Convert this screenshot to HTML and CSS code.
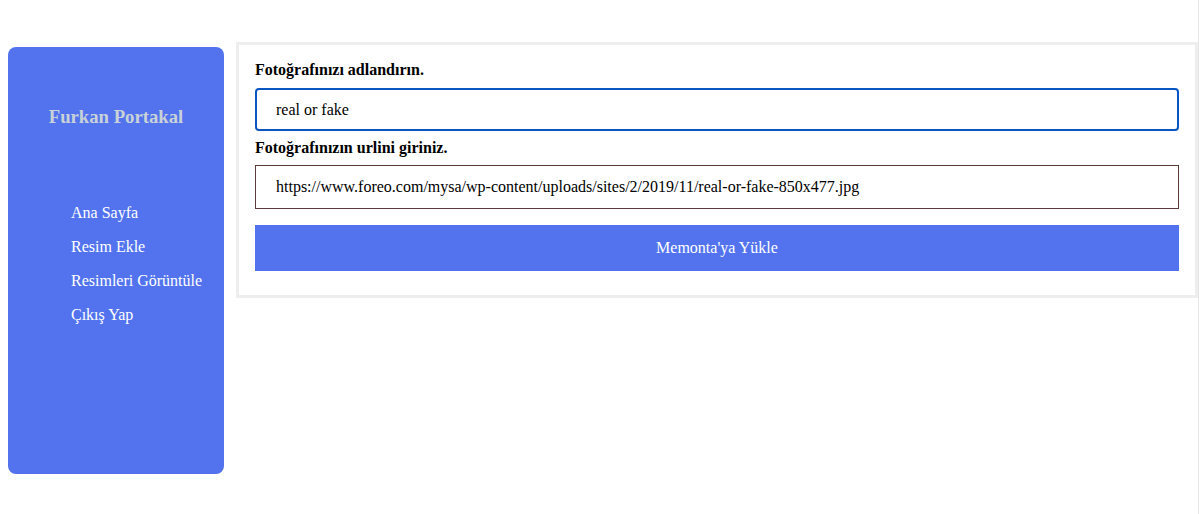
FILE: index.html
```html
<!DOCTYPE html>
<html lang="tr">
<head>
<meta charset="utf-8">
<title>Memonta</title>
<link rel="stylesheet" href="styles.css">
</head>
<body>
<div class="page">
  <aside class="sidebar">
    <h2 class="brand">Furkan Portakal</h2>
    <nav class="nav">
      <a class="nav-link" href="#">Ana Sayfa</a>
      <a class="nav-link" href="#">Resim Ekle</a>
      <a class="nav-link" href="#">Resimleri Görüntüle</a>
      <a class="nav-link" href="#">Çıkış Yap</a>
    </nav>
  </aside>
  <main class="panel">
    <label class="field-label" for="name">Fotoğrafınızı adlandırın.</label>
    <input class="field field-focus" id="name" type="text" value="real or fake">
    <label class="field-label second" for="url">Fotoğrafınızın urlini giriniz.</label>
    <input class="field" id="url" type="text" value="https://www.foreo.com/mysa/wp-content/uploads/sites/2/2019/11/real-or-fake-850x477.jpg">
    <button class="submit" type="button">Memonta'ya Yükle</button>
  </main>
</div>
</body>
</html>
```
FILE: styles.css
```css
* { box-sizing: border-box; }
html, body {
  margin: 0;
  padding: 0;
  background: #fff;
  font-family: "Liberation Serif", "Times New Roman", serif;
  color: #000;
}
.page {
  display: flex;
  align-items: flex-start;
  gap: 12px;
  width: 1199px;
  min-height: 514px;
  padding-left: 8px;
  border-right: 1px solid #e6e6e6;
}
.sidebar {
  margin-top: 47px;
  width: 216px;
  height: 427px;
  background: #5273ed;
  border-radius: 8px;
  padding-top: 58px;
}
.brand {
  margin: 0;
  text-align: center;
  font-size: 18.72px;
  line-height: 24px;
  font-weight: bold;
  color: #c8d2d8;
}
.nav {
  display: flex;
  flex-direction: column;
  padding-left: 63px;
  margin-top: 75px;
}
.nav-link {
  color: #fff;
  text-decoration: none;
  font-size: 16px;
  line-height: 18px;
  margin-bottom: 16px;
}
.panel {
  margin-top: 42px;
  width: 962px;
  border: 3px solid #eeeeee;
  padding: 16px 16px 24px;
  display: flex;
  flex-direction: column;
}
.field-label {
  display: block;
  font-weight: bold;
  font-size: 16px;
  line-height: 18px;
  margin-bottom: 9px;
}
.field-label.second {
  margin-top: 8px;
  margin-bottom: 8px;
}
.field {
  display: block;
  width: 100%;
  height: 44px;
  padding: 0 20px;
  font-family: "Liberation Serif", "Times New Roman", serif;
  font-size: 16px;
  color: #000;
  border: 1px solid #5c3b3b;
  border-radius: 0;
  background: #fff;
  outline: none;
}
.field-focus {
  height: 43px;
  border: 2px solid #0a55c2;
  border-radius: 4px;
  padding: 0 19px;
}
.submit {
  margin-top: 16px;
  width: 100%;
  height: 46px;
  border: none;
  background: #5273ed;
  color: #fff;
  font-family: "Liberation Serif", "Times New Roman", serif;
  font-size: 16px;
  cursor: pointer;
}
```
